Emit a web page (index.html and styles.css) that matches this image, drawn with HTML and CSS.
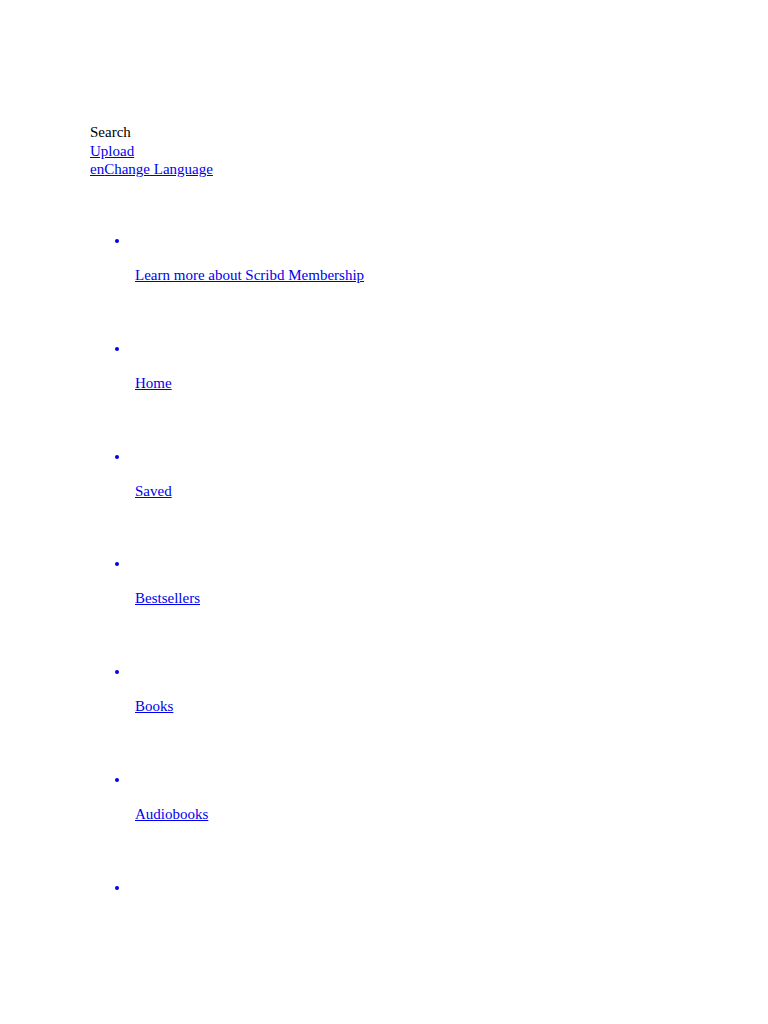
FILE: index.html
```html
<!DOCTYPE html>
<html>
<head>
<meta charset="utf-8">
<link rel="stylesheet" href="styles.css">
</head>
<body>
<div class="page">
  <div class="header">
    <div class="search">Search</div>
    <a class="link" href="#">Upload</a>
    <div><span class="lang">en</span><a class="link inline" href="#">Change Language</a></div>
  </div>
  <ul class="menu">
    <li><div class="icon">&#8203;</div><a class="label" href="#">Learn more about Scribd Membership</a></li>
    <li><div class="icon">&#8203;</div><a class="label" href="#">Home</a></li>
    <li><div class="icon">&#8203;</div><a class="label" href="#">Saved</a></li>
    <li><div class="icon">&#8203;</div><a class="label" href="#">Bestsellers</a></li>
    <li><div class="icon">&#8203;</div><a class="label" href="#">Books</a></li>
    <li><div class="icon">&#8203;</div><a class="label" href="#">Audiobooks</a></li>
    <li><div class="icon">&#8203;</div></li>
  </ul>
</div>
</body>
</html>
```
FILE: styles.css
```css
html, body {
  margin: 0;
  padding: 0;
  background: #ffffff;
}
body {
  font-family: "Liberation Serif", "Times New Roman", serif;
  font-size: 15px;
  line-height: 18.5px;
  color: #000000;
}
.page {
  padding: 123px 0 0 90px;
}
.header {
  display: flex;
  flex-direction: column;
  align-items: flex-start;
}
.link {
  color: #0000ee;
  text-decoration: underline;
}
.lang {
  color: #0000ee;
  text-decoration: underline;
}
.menu {
  list-style: disc;
  margin: 52.5px 0 0 0;
  padding: 0 0 0 40px;
  color: #0000ee;
}
.menu li {
  padding-bottom: 54.3px;
}
.icon {
  height: 18.5px;
}
.label {
  display: block;
  margin: 16.5px 0 0 5px;
  color: #0000ee;
  text-decoration: underline;
  width: max-content;
}
```
